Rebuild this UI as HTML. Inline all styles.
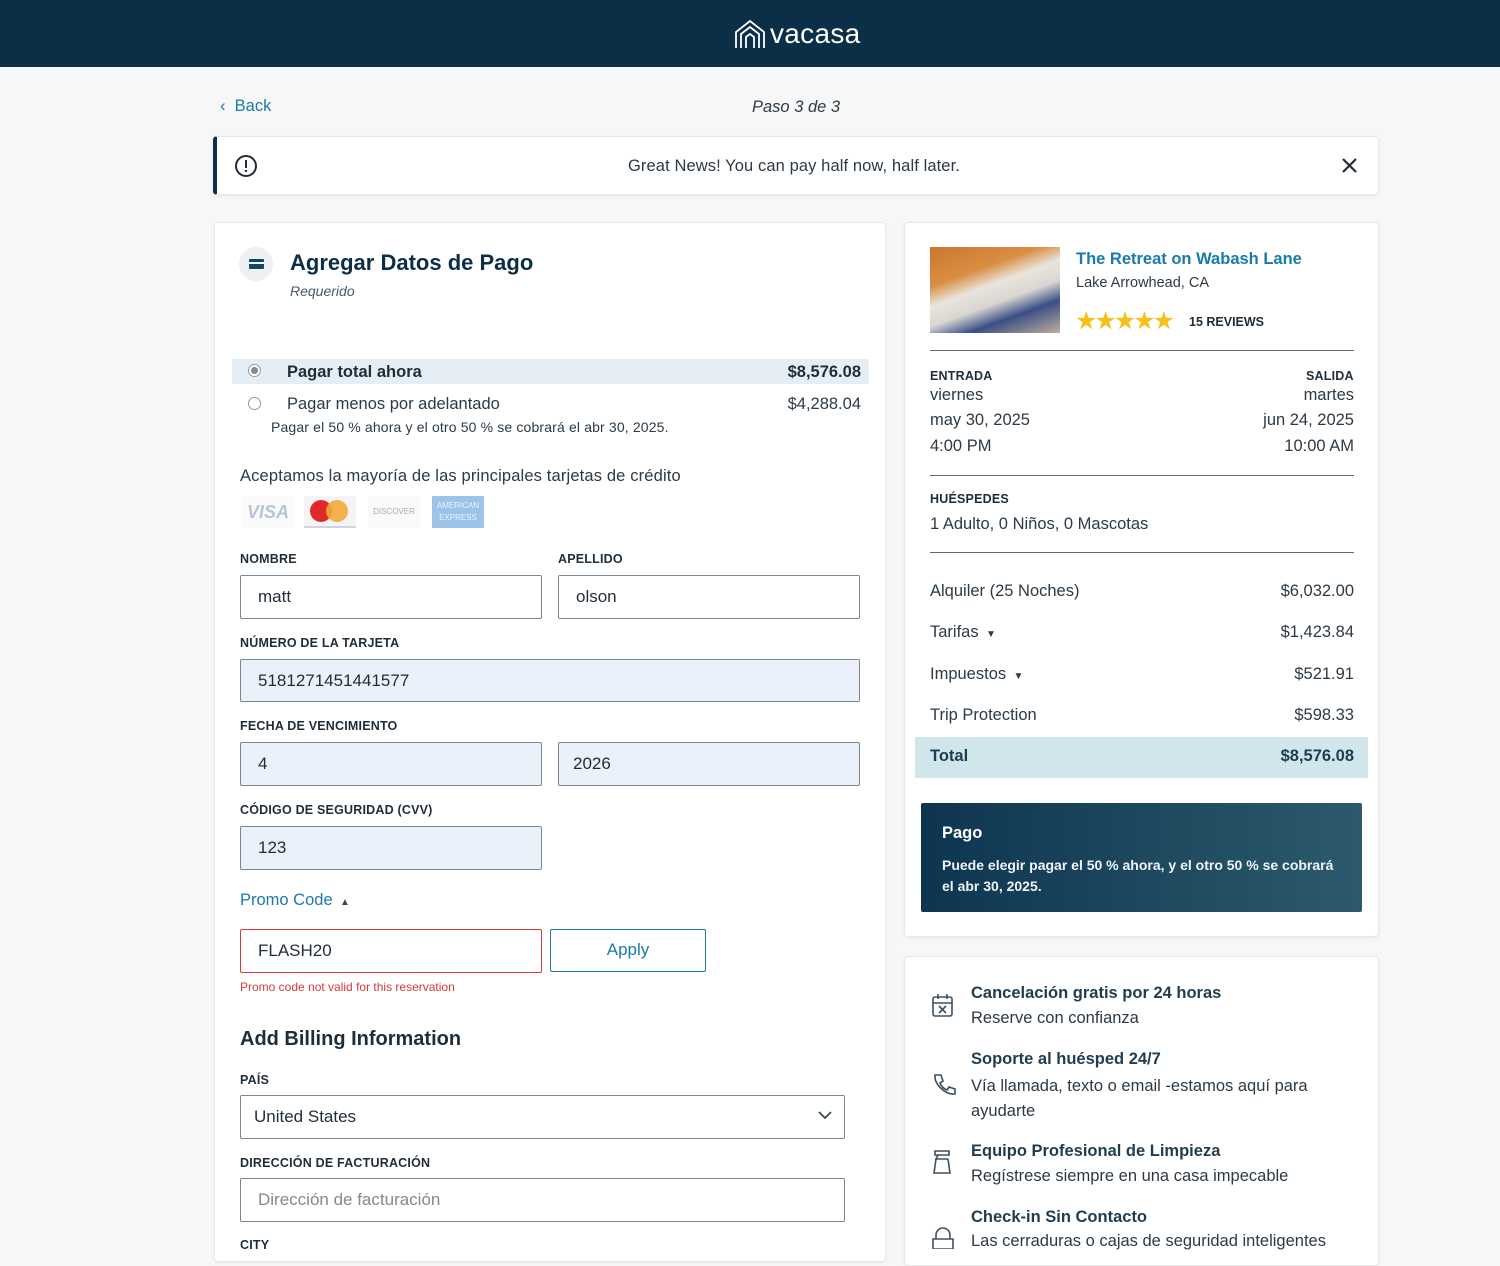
<!DOCTYPE html>
<html><head><meta charset="utf-8"><style>
*{box-sizing:border-box;margin:0;padding:0}
body{width:1500px;height:1248px;overflow:hidden;background:#f7f7f7;font-family:"Liberation Sans",sans-serif;color:#2b3a45;position:relative}
.a{position:absolute}
.hdr{left:0;top:0;width:1500px;height:67px;background:#0b2f47}
.card{background:#fff;border:1px solid #e8e8e8;border-radius:4px;box-shadow:0 1px 3px rgba(0,0,0,.06)}
.lbl{font-size:12.5px;font-weight:bold;color:#1f2d38;letter-spacing:.2px}
.inp{border:1px solid #7b8790;border-radius:2px;height:44px;font-size:17px;padding:11px 17px;color:#1f2d38;background:#fff}
.blue{background:#eaf1fb}
.t16{font-size:16.5px}
.row{left:930px;width:424px;display:flex;justify-content:space-between;font-size:16.5px;color:#2b3a45}
.hr{height:1px;background:#5c6a74;left:930px;width:424px}
.ic{stroke:#3e5060;fill:none;stroke-width:1.6}
</style></head><body>
<div class="a hdr"></div>
<svg class="a" style="left:734px;top:19px" width="32" height="30" viewBox="0 0 32 30"><g fill="none" stroke="#fff" stroke-width="1.8"><path d="M2 29V13L16 2l14 11v16"/><path d="M7 29V15l9-7 9 7v14"/><path d="M12 29V18l4-3 4 3v11"/></g></svg>
<div class="a" style="left:770px;top:18px;font-size:28px;color:#fff;letter-spacing:.3px">vacasa</div>

<div class="a" style="left:220px;top:97px;font-size:16.5px;color:#1a7aa8">&#8249;&nbsp; Back</div>
<div class="a" style="left:752px;top:98px;font-size:16.5px;font-style:italic;color:#2b3a45">Paso 3 de 3</div>

<div class="a card" style="left:213px;top:136px;width:1166px;height:59px;border-left:4px solid #0b2f47"></div>
<svg class="a" style="left:234px;top:154px" width="24" height="24"><circle cx="12" cy="12" r="10" fill="none" stroke="#1f2d38" stroke-width="2"/><path d="M12 6v8" stroke="#1f2d38" stroke-width="2"/><circle cx="12" cy="17" r="1.2" fill="#1f2d38"/></svg>
<div class="a" style="left:628px;top:157px;font-size:16.5px;color:#2b3a45;letter-spacing:.1px">Great News! You can pay half now, half later.</div>
<svg class="a" style="left:1341px;top:157px" width="17" height="17"><path d="M2 2l13 13M15 2L2 15" stroke="#1f2d38" stroke-width="2.2"/></svg>

<div class="a card" style="left:214px;top:222px;width:672px;height:1040px"></div>
<div class="a" style="left:239px;top:247px;width:34px;height:34px;border-radius:50%;background:#eef1f3"></div>
<div class="a" style="left:249px;top:259px;width:15px;height:10px;background:#0e4a66;border-radius:1px"></div>
<div class="a" style="left:249px;top:262px;width:15px;height:2px;background:#fff"></div>
<div class="a" style="left:290px;top:250px;font-size:22px;font-weight:bold;color:#0b2f47">Agregar Datos de Pago</div>
<div class="a" style="left:290px;top:283px;font-size:14px;font-style:italic;color:#4a5863">Requerido</div>

<div class="a" style="left:232px;top:359px;width:637px;height:25px;background:#e6eef5"></div>
<div class="a" style="left:248px;top:364px;width:13px;height:13px;border-radius:50%;border:1px solid #999;background:#fff"></div>
<div class="a" style="left:251px;top:367px;width:7px;height:7px;border-radius:50%;background:#888"></div>
<div class="a t16" style="left:287px;top:363px;font-weight:bold;color:#1f2d38">Pagar total ahora</div>
<div class="a t16" style="left:775px;top:363px;font-weight:bold;color:#1f2d38;width:86px;text-align:right">$8,576.08</div>
<div class="a" style="left:248px;top:397px;width:13px;height:13px;border-radius:50%;border:1px solid #999;background:#fff"></div>
<div class="a t16" style="left:287px;top:395px">Pagar menos por adelantado</div>
<div class="a t16" style="left:775px;top:395px;width:86px;text-align:right">$4,288.04</div>
<div class="a" style="left:271px;top:419px;font-size:14px;color:#2b3a45;letter-spacing:.15px">Pagar el 50 % ahora y el otro 50 % se cobrará el abr 30, 2025.</div>

<div class="a t16" style="left:240px;top:467px;letter-spacing:.15px">Aceptamos la mayoría de las principales tarjetas de crédito</div>
<div class="a" style="left:242px;top:496px;width:52px;height:32px;background:#fafafa;font-weight:bold;font-style:italic;color:#b8c4d8;font-size:18px;text-align:center;line-height:32px">VISA</div>
<div class="a" style="left:304px;top:496px;width:52px;height:32px;background:#f4f4f4;border-bottom:2px solid #cfd6dd"></div>
<div class="a" style="left:310px;top:500px;width:22px;height:22px;border-radius:50%;background:#e02a2a"></div>
<div class="a" style="left:326px;top:500px;width:22px;height:22px;border-radius:50%;background:#f4a93a;opacity:.9"></div>
<div class="a" style="left:368px;top:496px;width:52px;height:32px;background:#fafafa;font-size:8px;color:#aaa;text-align:center;line-height:32px">DISCOVER</div>
<div class="a" style="left:432px;top:496px;width:52px;height:32px;background:#9cc4e8;color:#e8f2fb;font-size:8px;text-align:center;line-height:12px;padding-top:4px">AMERICAN<br>EXPRESS</div>

<div class="a lbl" style="left:240px;top:552px">NOMBRE</div>
<div class="a lbl" style="left:558px;top:552px">APELLIDO</div>
<div class="a inp" style="left:240px;top:575px;width:302px">matt</div>
<div class="a inp" style="left:558px;top:575px;width:302px">olson</div>
<div class="a lbl" style="left:240px;top:636px">NÚMERO DE LA TARJETA</div>
<div class="a inp blue" style="left:240px;top:659px;width:620px;height:43px">5181271451441577</div>
<div class="a lbl" style="left:240px;top:719px">FECHA DE VENCIMIENTO</div>
<div class="a inp blue" style="left:240px;top:742px;width:302px">4</div>
<div class="a inp blue" style="left:558px;top:742px;width:302px;padding-left:14px">2026</div>
<div class="a lbl" style="left:240px;top:803px">CÓDIGO DE SEGURIDAD (CVV)</div>
<div class="a inp blue" style="left:240px;top:826px;width:302px">123</div>
<div class="a t16" style="left:240px;top:891px;color:#1a7aa8">Promo Code <span style="font-size:10px;color:#3a4a55">&nbsp;▲</span></div>
<div class="a inp" style="left:240px;top:929px;width:302px;border:1.5px solid #d43a3a">FLASH20</div>
<div class="a" style="left:550px;top:929px;width:156px;height:43px;border:1.5px solid #1a7aa8;border-radius:2px;color:#1a7aa8;font-size:17px;text-align:center;line-height:40px">Apply</div>
<div class="a" style="left:240px;top:980px;font-size:12px;color:#d43a3a">Promo code not valid for this reservation</div>
<div class="a" style="left:240px;top:1028px;font-size:20px;font-weight:bold;color:#1f2d38">Add Billing Information</div>
<div class="a lbl" style="left:240px;top:1073px">PAÍS</div>
<div class="a inp" style="left:240px;top:1095px;width:605px;padding-left:13px">United States</div>
<svg class="a" style="left:818px;top:1110px" width="14" height="10"><path d="M1 2l6 6 6-6" fill="none" stroke="#3a4a55" stroke-width="1.8"/></svg>
<div class="a lbl" style="left:240px;top:1156px">DIRECCIÓN DE FACTURACIÓN</div>
<div class="a inp" style="left:240px;top:1178px;width:605px;color:#808a92">Dirección de facturación</div>
<div class="a lbl" style="left:240px;top:1238px">CITY</div>

<div class="a card" style="left:904px;top:222px;width:475px;height:715px"></div>
<div class="a" style="left:930px;top:247px;width:130px;height:86px;background:linear-gradient(160deg,#c9772e 0%,#d98e44 30%,#e9e4dc 45%,#d9d6d2 60%,#3a4f86 75%,#bfae9a 100%)"></div>
<div class="a" style="left:1076px;top:250px;font-size:16.5px;font-weight:bold;color:#1a7aa8">The Retreat on Wabash Lane</div>
<div class="a" style="left:1076px;top:275px;font-size:14.5px;color:#2b3a45">Lake Arrowhead, CA</div>
<div class="a" style="left:1075px;top:306px;font-size:25px;color:#f5c11c;letter-spacing:-3px">★★★★★</div>
<div class="a" style="left:1189px;top:315px;font-size:12.5px;font-weight:bold;color:#1f2d38">15 REVIEWS</div>
<div class="a hr" style="top:350px"></div>
<div class="a lbl" style="left:930px;top:369px">ENTRADA</div>
<div class="a lbl" style="left:1306px;top:369px">SALIDA</div>
<div class="a row" style="top:386px"><span>viernes</span><span>martes</span></div>
<div class="a row" style="top:411px"><span>may 30, 2025</span><span>jun 24, 2025</span></div>
<div class="a row" style="top:437px"><span>4:00 PM</span><span>10:00 AM</span></div>
<div class="a hr" style="top:475px"></div>
<div class="a lbl" style="left:930px;top:492px">HUÉSPEDES</div>
<div class="a row" style="top:515px"><span>1 Adulto, 0 Niños, 0 Mascotas</span></div>
<div class="a hr" style="top:552px"></div>
<div class="a row" style="top:582px"><span>Alquiler (25 Noches)</span><span>$6,032.00</span></div>
<div class="a row" style="top:623px"><span>Tarifas <span style="font-size:10px">&nbsp;▼</span></span><span>$1,423.84</span></div>
<div class="a row" style="top:665px"><span>Impuestos <span style="font-size:10px">&nbsp;▼</span></span><span>$521.91</span></div>
<div class="a row" style="top:706px"><span>Trip Protection</span><span>$598.33</span></div>
<div class="a" style="left:915px;top:737px;width:453px;height:41px;background:#d1e6ea"></div>
<div class="a row" style="top:747px;font-weight:bold;color:#1f3d50"><span>Total</span><span>$8,576.08</span></div>
<div class="a" style="left:921px;top:803px;width:441px;height:109px;border-radius:2px;background:linear-gradient(90deg,#0e3550,#2c5a6c)"></div>
<div class="a" style="left:942px;top:824px;font-size:16.5px;font-weight:bold;color:#fff">Pago</div>
<div class="a" style="left:942px;top:855px;width:400px;font-size:14px;font-weight:bold;color:#eef4f7;line-height:21px">Puede elegir pagar el 50 % ahora, y el otro 50 % se cobrará el abr 30, 2025.</div>

<div class="a card" style="left:904px;top:956px;width:475px;height:310px"></div>
<svg class="a" style="left:931px;top:993px" width="24" height="26"><g class="ic"><rect x="2" y="4" width="19" height="19" rx="2"/><path d="M2 10h19M7 1v5M16 1v5M8 13l7 7M15 13l-7 7"/></g></svg>
<div class="a t16" style="left:971px;top:984px;font-weight:bold;color:#1f3d50">Cancelación gratis por 24 horas</div>
<div class="a t16" style="left:971px;top:1009px">Reserve con confianza</div>
<svg class="a" style="left:931px;top:1073px" width="26" height="26"><path class="ic" d="M5 2l5 0 2 6-3 2c1 3 4 6 7 7l2-3 6 2v5c-10 1-21-10-20-19z"/></svg>
<div class="a t16" style="left:971px;top:1050px;font-weight:bold;color:#1f3d50">Soporte al huésped 24/7</div>
<div class="a t16" style="left:971px;top:1074px;line-height:25px;width:380px">Vía llamada, texto o email -estamos aquí para ayudarte</div>
<svg class="a" style="left:932px;top:1149px" width="20" height="28"><path class="ic" d="M3 2h14v4H3zM6 6l-2 4h12M4 10l-2 14h16l-2-14"/></svg>
<div class="a t16" style="left:971px;top:1142px;font-weight:bold;color:#1f3d50">Equipo Profesional de Limpieza</div>
<div class="a t16" style="left:971px;top:1167px">Regístrese siempre en una casa impecable</div>
<svg class="a" style="left:931px;top:1227px" width="24" height="22"><path class="ic" d="M5 12V8a7 7 0 0 1 14 0v4M2 12h20v10H2z"/></svg>
<div class="a t16" style="left:971px;top:1208px;font-weight:bold;color:#1f3d50">Check-in Sin Contacto</div>
<div class="a t16" style="left:971px;top:1232px">Las cerraduras o cajas de seguridad inteligentes</div>
</body></html>
